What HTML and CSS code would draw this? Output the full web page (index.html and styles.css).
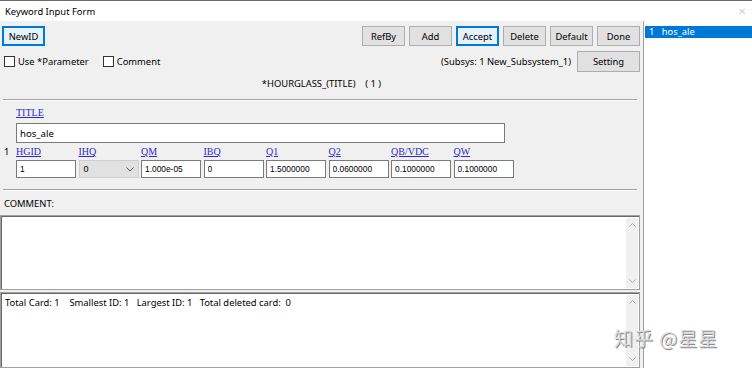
FILE: index.html
```html
<!DOCTYPE html>
<html lang="en">
<head>
    <meta charset="UTF-8">
    <meta name="viewport" content="width=device-width, initial-scale=1.0">
    <title>Keyword Input Form</title>
    <link rel="stylesheet" href="styles.css">
</head>
<body>
<div class="window">
    <div class="titlebar">
        <span class="title">Keyword Input Form</span>
        <span class="close">&#x2715;</span>
    </div>

    <div class="main">
        <div class="form">
            <div class="toolbar">
                <button class="btn focus">NewID</button>
                <div class="btn-group">
                    <button class="btn">RefBy</button>
                    <button class="btn">Add</button>
                    <button class="btn focus">Accept</button>
                    <button class="btn">Delete</button>
                    <button class="btn">Default</button>
                    <button class="btn">Done</button>
                </div>
            </div>

            <div class="options">
                <label class="check"><span class="box"></span>Use *Parameter</label>
                <label class="check"><span class="box"></span>Comment</label>
                <span class="subsys">(Subsys: 1 New_Subsystem_1)</span>
                <button class="btn setting">Setting</button>
            </div>

            <div class="keyword">*HOURGLASS_(TITLE)&nbsp;&nbsp;&nbsp;&nbsp;( 1 )</div>

            <div class="sep"></div>

            <div class="card">
                <a class="field-label" href="#">TITLE</a>
                <input class="field title-field" type="text" value="hos_ale">

                <div class="card-row">
                    <span class="row-no">1</span>
                    <div class="fields">
                        <a class="field-label" href="#">HGID</a>
                        <a class="field-label" href="#">IHQ</a>
                        <a class="field-label" href="#">QM</a>
                        <a class="field-label" href="#">IBQ</a>
                        <a class="field-label" href="#">Q1</a>
                        <a class="field-label" href="#">Q2</a>
                        <a class="field-label" href="#">QB/VDC</a>
                        <a class="field-label" href="#">QW</a>

                        <input class="field" type="text" value="1">
                        <div class="combo">
                            <span>0</span>
                            <svg width="8" height="5" viewBox="0 0 8 5"><path d="M0.5 0.5 L4 4 L7.5 0.5" fill="none" stroke="#555" stroke-width="1"/></svg>
                        </div>
                        <input class="field" type="text" value="1.000e-05">
                        <input class="field" type="text" value="0">
                        <input class="field" type="text" value="1.5000000">
                        <input class="field" type="text" value="0.0600000">
                        <input class="field" type="text" value="0.1000000">
                        <input class="field" type="text" value="0.1000000">
                    </div>
                </div>
            </div>

            <div class="sep lower"></div>

            <div class="comment-label">COMMENT:</div>

            <div class="textbox comment">
                <div class="text"></div>
                <div class="scroll">
                    <svg width="7" height="4" viewBox="0 0 7 4"><path d="M0.5 3.5 L3.5 0.5 L6.5 3.5" fill="none" stroke="#a6a6a6"/></svg>
                    <svg width="7" height="4" viewBox="0 0 7 4"><path d="M0.5 0.5 L3.5 3.5 L6.5 0.5" fill="none" stroke="#a6a6a6"/></svg>
                </div>
            </div>

            <div class="textbox status">
                <div class="text">Total Card: 1&nbsp;&nbsp;&nbsp;&nbsp;Smallest ID: 1&nbsp;&nbsp;&nbsp;Largest ID: 1&nbsp;&nbsp;&nbsp;Total deleted card:&nbsp;&nbsp;0</div>
                <div class="scroll">
                    <svg width="7" height="4" viewBox="0 0 7 4"><path d="M0.5 3.5 L3.5 0.5 L6.5 3.5" fill="none" stroke="#a6a6a6"/></svg>
                    <svg width="7" height="4" viewBox="0 0 7 4"><path d="M0.5 0.5 L3.5 3.5 L6.5 0.5" fill="none" stroke="#a6a6a6"/></svg>
                </div>
            </div>
        </div>

        <div class="list">
            <div class="list-item selected">1&nbsp;&nbsp;&nbsp;hos_ale</div>
        </div>
    </div>

    <div class="watermark">知乎 @星星</div>
</div>
</body>
</html>
```

FILE: styles.css
```css
body {
    margin: 0;
    font-family: "Noto Sans", "Liberation Sans", sans-serif;
    font-size: 9.4px;
    color: #000;
    background-color: #fff;
}

.window {
    position: relative;
    width: 752px;
    height: 368px;
    overflow: hidden;
    display: flex;
    flex-direction: column;
}

/* title bar */
.titlebar {
    height: 21px;
    border-top: 1px solid #6b6b6b;
    display: flex;
    align-items: center;
    justify-content: space-between;
    padding: 0 5px;
    background-color: #fff;
}

.title {
    font-size: 9.4px;
}

.close {
    color: #d0d0d0;
    font-size: 10px;
    margin-right: 1px;
}

.main {
    flex: 1;
    display: flex;
}

/* left form area */
.form {
    width: 643px;
    background-color: #f0f0f0;
    display: flex;
    flex-direction: column;
}

.btn {
    font-family: inherit;
    font-size: 9.4px;
    height: 20px;
    padding: 0;
    background-color: #e1e1e1;
    border: 1px solid #adadad;
    color: #000;
}

.btn.focus {
    background-color: #e5f1fb;
    border: 2px solid #0078d7;
}

.toolbar {
    margin-top: 5px;
    padding: 0 3px 0 2px;
    display: flex;
    justify-content: space-between;
}

.toolbar .btn {
    width: 43px;
}

.btn-group {
    display: flex;
    gap: 4px;
}

.options {
    margin-top: 5px;
    height: 21px;
    padding: 0 3px 0 4px;
    display: flex;
    align-items: center;
}

.check {
    display: flex;
    align-items: center;
    margin-right: 14px;
}

.box {
    width: 9px;
    height: 9px;
    border: 1px solid #333;
    background-color: #fff;
    margin-right: 3px;
}

.subsys {
    margin-left: auto;
    margin-right: 6px;
}

.btn.setting {
    width: 63px;
    height: 21px;
}

.keyword {
    margin-top: 4px;
    height: 16px;
    line-height: 16px;
    text-align: center;
}

.sep {
    margin: 7px 6px 0 3px;
    height: 1px;
    border-top: 1px solid #a0a0a0;
    background-color: #fff;
}

.sep.lower {
    margin-top: 11px;
}

/* card fields */
.card {
    padding-left: 16px;
    display: flex;
    flex-direction: column;
    align-items: flex-start;
}

.field-label {
    font-family: "Liberation Serif", serif;
    font-size: 10px;
    color: #2a2ad0;
    text-decoration: underline;
    line-height: 14px;
    height: 14px;
}

.card > .field-label {
    margin-top: 5px;
}

.field {
    box-sizing: border-box;
    height: 18px;
    margin: 0;
    padding: 0 0 0 3px;
    border: 1px solid #7a7a7a;
    background-color: #fff;
    font-family: "Liberation Sans", sans-serif;
    font-size: 8.4px;
    color: #000;
    outline: none;
    width: 60px;
}

.title-field {
    margin-top: 3px;
    width: 489px;
    height: 20px;
    font-family: "Noto Sans", sans-serif;
    font-size: 9.6px;
}

.card-row {
    position: relative;
    margin-top: 2px;
}

.row-no {
    position: absolute;
    left: -12px;
    top: 0;
    line-height: 14px;
}

.fields {
    display: grid;
    grid-template-columns: repeat(8, 60px);
    column-gap: 2.5px;
    row-gap: 1px;
}

.combo {
    box-sizing: border-box;
    height: 18px;
    border: 1px solid #cfcfcf;
    background-color: #e1e1e1;
    display: flex;
    align-items: center;
    justify-content: space-between;
    padding: 0 4px 0 4px;
    font-family: "Liberation Sans", sans-serif;
    font-size: 9px;
}

.comment-label {
    margin: 6px 0 0 4px;
    line-height: 14px;
}

/* text boxes */
.textbox {
    box-sizing: border-box;
    width: 640px;
    height: 75px;
    margin-top: 4px;
    background-color: #fff;
    border: 1px solid #a0a0a0;
    box-shadow: inset 1px 1px 0 #696969;
    display: flex;
}

.textbox.status {
    margin-top: 2px;
    height: 76px;
}

.textbox .text {
    flex: 1;
    padding: 3px 0 0 4px;
}

.scroll {
    width: 12px;
    margin: 2px 1px 1px 0;
    background-color: #f0f0f0;
    display: flex;
    flex-direction: column;
    justify-content: space-between;
    align-items: center;
    padding: 5px 0;
}

/* right list */
.list {
    flex: 1;
    border-left: 1px solid #a0a0a0;
    padding-top: 5px;
    background-color: #fff;
}

.list-item {
    height: 12px;
    line-height: 12px;
    padding-left: 4px;
    margin-left: 1px;
}

.list-item.selected {
    background-color: #0078d7;
    color: #fff;
}

.watermark {
    position: absolute;
    left: 614px;
    top: 324px;
    font-family: "Noto Sans CJK SC", sans-serif;
    font-size: 19px;
    color: #dadada;
    text-shadow: 1px 1px 0 #8a8a8a;
    letter-spacing: 1px;
}
```
